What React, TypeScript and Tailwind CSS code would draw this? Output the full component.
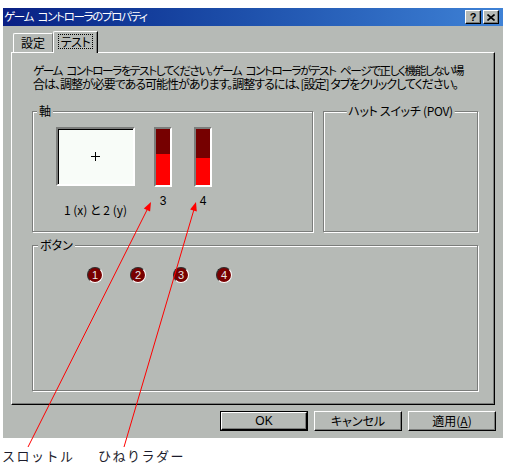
import React from "react";

const raised =
  "border border-t-white border-l-white border-r-black border-b-black shadow-[inset_-1px_-1px_0_#7b7d7b]";
const sunken =
  "border-2 border-t-[#7b7d7b] border-l-[#7b7d7b] border-r-white border-b-white shadow-[inset_1px_1px_0_#000]";
const etched = "border border-[#7b7d7b] shadow-[inset_1px_1px_0_#fff,1px_1px_0_#fff]";

function TitleBtn({ children }: { children: React.ReactNode }) {
  return (
    <div
      className={`w-[16px] h-[14px] bg-[#b6bab6] flex items-center justify-center ${raised}`}
    >
      {children}
    </div>
  );
}

function Bar({ red }: { red: number }) {
  return (
    <div className={`w-[18px] h-[60px] flex flex-col ${sunken}`}>
      <div className="flex-1 bg-[#760000]" />
      <div className="bg-[#ff0000]" style={{ height: red }} />
    </div>
  );
}

function Circle({ n }: { n: string }) {
  return (
    <div className="w-[16px] h-[16px] rounded-full bg-[#780000] border border-t-[#303030] border-l-[#303030] border-r-white border-b-white flex items-center justify-center text-[11px] leading-none text-[#e6e6e6] font-['Liberation_Sans',sans-serif]">
      {n}
    </div>
  );
}

function Btn({ children, def }: { children: React.ReactNode; def?: boolean }) {
  if (def) {
    return (
      <div className="w-[88px] h-[20px] border border-black">
        <div
          className={`w-full h-full flex items-center justify-center text-[12px] leading-none ${raised}`}
        >
          {children}
        </div>
      </div>
    );
  }
  return (
    <div
      className={`w-[88px] h-[20px] flex items-center justify-center text-[12px] leading-none ${raised}`}
    >
      {children}
    </div>
  );
}

export default function App() {
  return (
    <div className="relative w-[507px] h-[467px] bg-white overflow-hidden font-['Noto_Sans_CJK_JP',sans-serif] [font-feature-settings:'palt'] text-black">
      <div className="ml-[3px] mt-[8px] w-[500px] h-[430px] bg-[#b6bab6] flex flex-col">
        {/* title bar */}
        <div className="h-[18px] flex items-center justify-between bg-gradient-to-r from-[#0a1f84] to-[#3f82d6] pl-[1px] pr-[4px]">
          <span className="text-white text-[11.5px] leading-none tracking-[-1.3px] whitespace-nowrap">
            ゲーム{"\u2002"}コントローラのプロパティ
          </span>
          <div className="flex gap-[2px]">
            <TitleBtn>
              <span className="text-[11px] font-bold leading-none font-['Liberation_Sans',sans-serif]">?</span>
            </TitleBtn>
            <TitleBtn>
              <svg width="8" height="7" viewBox="0 0 8 7">
                <path d="M0.5 0.5 L7.5 6.5 M7.5 0.5 L0.5 6.5" stroke="#000" strokeWidth="1.6" />
              </svg>
            </TitleBtn>
          </div>
        </div>

        {/* tabs */}
        <div className="mt-[5px] ml-[10px] h-[21px] flex items-end">
          <div className="w-[40px] h-[19px] border-t border-l border-white border-r border-r-[#7b7d7b] rounded-tl-[2px] flex items-center justify-center text-[12px] leading-none">
            設定
          </div>
          <div className="relative z-10 -mb-[1px] w-[45px] h-[22px] bg-[#b6bab6] border-t border-l border-white border-r border-r-black shadow-[inset_-1px_0_0_#7b7d7b] rounded-tl-[2px] flex items-start justify-center pt-[2px]">
            <div className="border border-dotted border-black px-[2px] h-[15px] flex items-center text-[12px] leading-none tracking-[-0.5px]">
              テスト
            </div>
          </div>
        </div>

        {/* panel */}
        <div
          className={`ml-[8px] w-[484px] h-[353px] pl-[20px] pt-[10px] flex flex-col ${raised}`}
        >
          <div className="ml-[1px] leading-[14px] whitespace-nowrap">
            <div className="text-[11.7px] tracking-[-1.5px]">
              ゲーム{"\u2002"}コントローラをテストしてください。ゲーム{"\u2002"}コントローラがテスト{"\u2002"}ページで正しく機能しない場
            </div>
            <div className="text-[12px] tracking-[-1px]">
              合は、調整が必要である可能性があります。調整するには、[設定] タブをクリックしてください。
            </div>
          </div>

          <div className="mt-[20px] flex">
            {/* axis group */}
            <div className={`relative w-[281px] h-[121px] ${etched}`}>
              <span className="absolute left-[4px] -top-[8px] px-[2px] bg-[#b6bab6] text-[12px] leading-[14px]">
                軸
              </span>
              <div className="pl-[23px] pt-[15px] flex items-start">
                <div className="flex flex-col items-center w-[79px]">
                  <div className={`w-[79px] h-[59px] bg-[#f8fcf8] flex items-center justify-center ${sunken}`}>
                    <svg width="9" height="9" viewBox="0 0 9 9">
                      <path d="M4.5 0 V9 M0 4.5 H9" stroke="#000" strokeWidth="1" />
                    </svg>
                  </div>
                  <div className="mt-[17px] text-[12px] leading-[14px] whitespace-nowrap">
                    1 (x) と 2 (y)
                  </div>
                </div>
                <div className="ml-[19px] flex flex-col items-center">
                  <Bar red={31} />
                  <div className="mt-[7px] text-[12px] leading-[14px] font-['Liberation_Sans',sans-serif]">3</div>
                </div>
                <div className="ml-[22px] flex flex-col items-center">
                  <Bar red={27} />
                  <div className="mt-[7px] text-[12px] leading-[14px] font-['Liberation_Sans',sans-serif]">4</div>
                </div>
              </div>
            </div>

            {/* hat group */}
            <div className={`relative ml-[10px] w-[155px] h-[121px] ${etched}`}>
              <span className="absolute left-1/2 -translate-x-1/2 -top-[8px] px-[2px] bg-[#b6bab6] text-[12px] leading-[14px] whitespace-nowrap tracking-[-0.3px]">
                ハット スイッチ (POV)
              </span>
            </div>
          </div>

          {/* buttons group */}
          <div className={`relative mt-[13px] w-[446px] h-[146px] ${etched}`}>
            <span className="absolute left-[5px] -top-[8px] px-[2px] bg-[#b6bab6] text-[12px] leading-[14px]">
              ボタン
            </span>
            <div className="pl-[54px] pt-[21px] flex gap-[27px]">
              <Circle n="1" />
              <Circle n="2" />
              <Circle n="3" />
              <Circle n="4" />
            </div>
          </div>
        </div>

        {/* dialog buttons */}
        <div className="mt-[6px] pr-[7px] flex justify-end gap-[6px]">
          <Btn def>
            <span className="font-['Liberation_Sans',sans-serif]">OK</span>
          </Btn>
          <Btn>キャンセル</Btn>
          <Btn>
            適用(<span className="underline">A</span>)
          </Btn>
        </div>
      </div>

      {/* annotation labels */}
      <div className="mt-[10px] pl-[2px] flex text-[13px] leading-[16px] tracking-[1.5px] text-[#1c1c2c] [font-feature-settings:normal]">
        <span className="w-[96px]">スロットル</span>
        <span>ひねりラダー</span>
      </div>

      {/* annotation arrows */}
      <svg
        className="absolute inset-0 pointer-events-none"
        width="507"
        height="467"
        viewBox="0 0 507 467"
      >
        <line x1="149" y1="206" x2="28" y2="447" stroke="#ff0000" strokeWidth="1" />
        <polygon points="151,202 150.1,211.6 143.8,208.5" fill="#ff0000" />
        <line x1="195" y1="206" x2="124" y2="447" stroke="#ff0000" strokeWidth="1" />
        <polygon points="196,202 196.8,211.6 190.1,209.6" fill="#ff0000" />
      </svg>
    </div>
  );
}
